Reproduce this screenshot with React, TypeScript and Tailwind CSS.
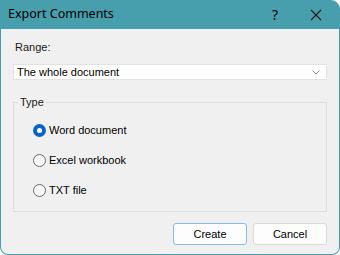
import { useState } from 'react'

const options = ['Word document', 'Excel workbook', 'TXT file']

function Radio({ checked }: { checked: boolean }) {
  if (checked) {
    return (
      <span className="w-[13px] h-[13px] rounded-full bg-[#0a64c2] flex items-center justify-center shrink-0">
        <span className="w-[5px] h-[5px] rounded-full bg-white" />
      </span>
    )
  }
  return <span className="w-[13px] h-[13px] rounded-full border border-[#6b6b6b] bg-[#f7f7f7] shrink-0" />
}

export default function App() {
  const [selected, setSelected] = useState(0)

  return (
    <div className="w-[340px] h-[255px] bg-[#479fad] rounded-tr-[9px] rounded-b-[8px] flex flex-col px-px pb-px font-['Liberation_Sans',Arial,sans-serif] text-[11px] text-black">
      <div className="h-[29px] flex items-center pl-[7px] shrink-0">
        <span className="font-['Noto_Sans',sans-serif] text-[12.5px] leading-none">Export Comments</span>
        <span className="ml-auto mr-[32px] font-['Noto_Sans',sans-serif] text-[14px] leading-none">?</span>
        <svg width="12" height="12" viewBox="0 0 12 12" className="mr-[17px]">
          <path d="M1 1 L11 11 M11 1 L1 11" stroke="#1a1a1a" strokeWidth="1.1" fill="none" />
        </svg>
      </div>

      <div className="flex-1 bg-[#f0f0f0] rounded-b-[7px] px-[12px] flex flex-col">
        <div className="mt-[12px] ml-[2px] leading-[13px] text-[#1a1a1a]">Range:</div>

        <div className="mt-[10px] h-[16px] bg-white border border-[#e2e2e2] flex items-center pl-[3px] pr-[6px]">
          <span className="leading-none">The whole document</span>
          <svg width="8" height="5" viewBox="0 0 8 5" className="ml-auto">
            <path d="M0.5 0.5 L4 4 L7.5 0.5" stroke="#8a8a8a" strokeWidth="1" fill="none" />
          </svg>
        </div>

        <fieldset className="mt-[16px] h-[116px] border border-[#dddddd] p-0 m-0 min-w-0">
          <legend className="ml-[4px] px-[2px] leading-[13px] text-[#1a1a1a]">Type</legend>
          <div className="flex flex-col gap-[17px] mt-[15px] pl-[19px]">
            {options.map((opt, i) => (
              <button
                key={opt}
                onClick={() => setSelected(i)}
                className="flex items-center gap-[3px] h-[13px] text-left"
              >
                <Radio checked={selected === i} />
                <span className="leading-none">{opt}</span>
              </button>
            ))}
          </div>
        </fieldset>

        <div className="mt-[11px] flex justify-end gap-[6px]">
          <button className="w-[74px] h-[22px] bg-[#fdfdfd] border border-[#8cbbe8] rounded-[3px]">Create</button>
          <button className="w-[74px] h-[22px] bg-[#fdfdfd] border border-[#dadada] rounded-[3px]">Cancel</button>
        </div>
      </div>
    </div>
  )
}
